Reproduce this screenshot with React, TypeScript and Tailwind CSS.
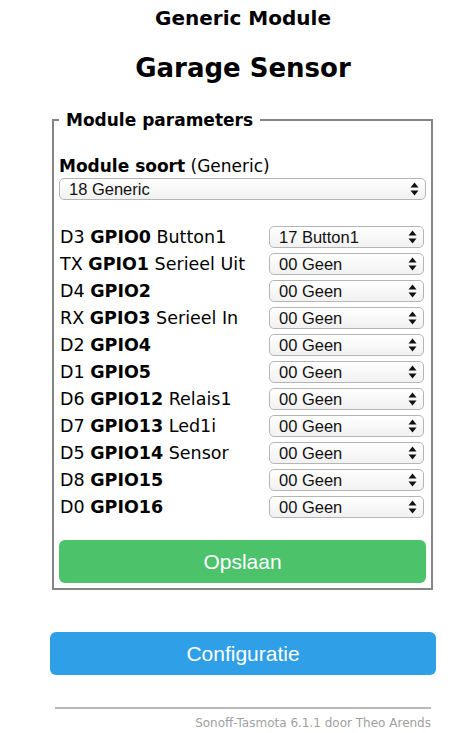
import React from "react";

const verdana = { fontFamily: '"DejaVu Sans", Verdana, sans-serif' };
const helv = { fontFamily: '"Liberation Sans", Helvetica, Arial, sans-serif' };

const rows: { pin: string; gpio: string; name?: string; value: string }[] = [
  { pin: "D3", gpio: "GPIO0", name: "Button1", value: "17 Button1" },
  { pin: "TX", gpio: "GPIO1", name: "Serieel Uit", value: "00 Geen" },
  { pin: "D4", gpio: "GPIO2", value: "00 Geen" },
  { pin: "RX", gpio: "GPIO3", name: "Serieel In", value: "00 Geen" },
  { pin: "D2", gpio: "GPIO4", value: "00 Geen" },
  { pin: "D1", gpio: "GPIO5", value: "00 Geen" },
  { pin: "D6", gpio: "GPIO12", name: "Relais1", value: "00 Geen" },
  { pin: "D7", gpio: "GPIO13", name: "Led1i", value: "00 Geen" },
  { pin: "D5", gpio: "GPIO14", name: "Sensor", value: "00 Geen" },
  { pin: "D8", gpio: "GPIO15", value: "00 Geen" },
  { pin: "D0", gpio: "GPIO16", value: "00 Geen" },
];

function Arrows() {
  return (
    <svg width="9" height="14" viewBox="0 0 9 14" className="shrink-0">
      <path d="M4.5 0.5 L8.5 5.5 L0.5 5.5 Z" fill="#111" />
      <path d="M4.5 13.5 L8.5 8.5 L0.5 8.5 Z" fill="#111" />
    </svg>
  );
}

function FakeSelect({ value, className = "" }: { value: string; className?: string }) {
  return (
    <div
      className={`flex h-[22px] items-center justify-between rounded-[5px] border border-[#b5b5b5] bg-gradient-to-b from-[#ffffff] to-[#f1f1f1] pl-[9px] pr-[6px] text-[16.5px] leading-none text-[#111] ${className}`}
      style={helv}
    >
      <span>{value}</span>
      <Arrows />
    </div>
  );
}

export default function App() {
  return (
    <div className="min-h-[733px] w-[474px] bg-white text-black" style={verdana}>
      <div className="ml-[50px] w-[386px]">
        <h3 className="pt-[6px] text-center text-[20px] font-bold leading-[24px]">Generic Module</h3>
        <h2 className="mt-[22px] text-center text-[26px] font-bold leading-[32px]">Garage Sensor</h2>

        <fieldset className="mt-[25px] ml-[2px] mr-[3px] border-2 border-[#858585] px-[5px] pb-[1px]">
          <legend className="ml-0 px-[7px] text-[17px] font-bold leading-[22px]">Module parameters</legend>

          <div className="mt-[24px] text-[17px] leading-[22px]">
            <b>Module soort</b> (Generic)
          </div>
          <FakeSelect value="18 Generic" className="mt-[1px]" />

          <div className="mt-[26px] flex flex-col gap-[5px]">
            {rows.map((r) => (
              <div key={r.gpio} className="flex h-[22px] items-center">
                <div className="w-[210px] shrink-0 pl-[1px] pt-[1px] text-[17.5px] leading-none whitespace-nowrap">
                  {r.pin} <b>{r.gpio}</b>
                  {r.name ? ` ${r.name}` : ""}
                </div>
                <FakeSelect value={r.value} className="w-[155px] shrink-0" />
              </div>
            ))}
          </div>

          <button
            type="button"
            className="mt-[22px] mb-[4px] flex h-[43px] w-full items-center justify-center rounded-[6px] bg-[#4cc26b] text-[21px] text-white"
            style={helv}
          >
            Opslaan
          </button>
        </fieldset>

        <button
          type="button"
          className="mt-[42px] flex h-[43px] w-full items-center justify-center rounded-[6px] bg-[#2fa0e7] text-[21px] text-white"
          style={helv}
        >
          Configuratie
        </button>

        <div className="mx-[5px] mt-[32px] border-t-2 border-[#b8b8b8]" />
        <div className="mr-[5px] mt-[7px] text-right text-[12px] leading-[15px] text-[#a0a0a0]">
          Sonoff-Tasmota 6.1.1 door Theo Arends
        </div>
      </div>
    </div>
  );
}
